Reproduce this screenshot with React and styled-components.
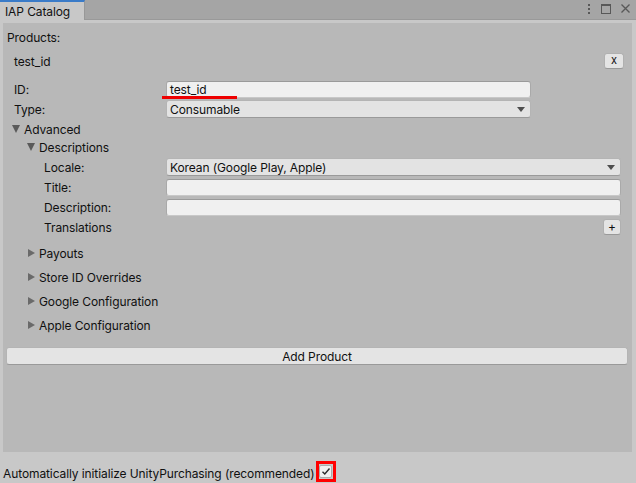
import React from "react";
import styled, { createGlobalStyle } from "styled-components";

const GlobalStyle = createGlobalStyle`
  html, body {
    margin: 0;
    padding: 0;
    background: #c8c8c8;
  }
  body {
    font-family: Inter, "Noto Sans", sans-serif;
    font-size: 12px;
    letter-spacing: -0.1px;
    color: #101010;
  }
`;

export default function App() {
  return (
    <Window>
      <GlobalStyle />
      <TabBar>
        <Tab>IAP Catalog</Tab>
        <TabIcons>
          <svg width="4" height="10" viewBox="0 0 4 10">
            <rect x="1" y="0" width="2" height="2" fill="#585858" />
            <rect x="1" y="4" width="2" height="2" fill="#585858" />
            <rect x="1" y="8" width="2" height="2" fill="#585858" />
          </svg>
          <svg width="10" height="10" viewBox="0 0 10 10">
            <rect x="0.5" y="0.5" width="9" height="9" fill="none" stroke="#585858" />
            <rect x="0" y="0" width="10" height="2" fill="#585858" />
          </svg>
          <svg width="9" height="9" viewBox="0 0 9 9">
            <path d="M0.5 0.5 L8.5 8.5 M8.5 0.5 L0.5 8.5" stroke="#585858" strokeWidth="1.3" />
          </svg>
        </TabIcons>
      </TabBar>

      <Content>
        <Panel>
          <PlainRow height={18} indent={4}>Products:</PlainRow>
          <ProductHeader>
            <span>test_id</span>
            <SmallButton>x</SmallButton>
          </ProductHeader>

          <FieldRow top={8}>
            <Label indent={11}>ID:</Label>
            <FieldWrap narrow>
              <TextField>test_id</TextField>
              <RedUnderline />
            </FieldWrap>
          </FieldRow>
          <FieldRow>
            <Label indent={11}>Type:</Label>
            <FieldWrap narrow>
              <Dropdown>
                Consumable
                <Arrow />
              </Dropdown>
            </FieldWrap>
          </FieldRow>

          <Foldout height={18} indent={9} top={1} open>
            <Triangle open />
            Advanced
          </Foldout>
          <Foldout height={18} indent={24} open>
            <Triangle open />
            Descriptions
          </Foldout>

          <FieldRow top={1}>
            <Label indent={41}>Locale:</Label>
            <FieldWrap>
              <Dropdown>
                Korean (Google Play, Apple)
                <Arrow />
              </Dropdown>
            </FieldWrap>
          </FieldRow>
          <FieldRow>
            <Label indent={41}>Title:</Label>
            <FieldWrap>
              <TextField />
            </FieldWrap>
          </FieldRow>
          <FieldRow>
            <Label indent={41}>Description:</Label>
            <FieldWrap>
              <TextField />
            </FieldWrap>
          </FieldRow>
          <FieldRow>
            <Label indent={41}>Translations</Label>
            <FieldWrap>
              <PlusButton>+</PlusButton>
            </FieldWrap>
          </FieldRow>

          <Closed>
            <Foldout height={24} indent={25}>
              <Triangle />
              Payouts
            </Foldout>
            <Foldout height={24} indent={25}>
              <Triangle />
              Store ID Overrides
            </Foldout>
            <Foldout height={24} indent={25}>
              <Triangle />
              Google Configuration
            </Foldout>
            <Foldout height={24} indent={25}>
              <Triangle />
              Apple Configuration
            </Foldout>
          </Closed>

          <AddButton>Add Product</AddButton>
        </Panel>

        <BottomRow>
          <span>Automatically initialize UnityPurchasing (recommended)</span>
          <CheckHighlight>
            <CheckBox>
              <svg width="10" height="9" viewBox="0 0 10 9">
                <path d="M1.5 4.8 L3.8 7 L8.5 1.5" fill="none" stroke="#2a2a2a" strokeWidth="1.4" />
              </svg>
            </CheckBox>
          </CheckHighlight>
        </BottomRow>
      </Content>
    </Window>
  );
}

const Window = styled.div`
  width: 636px;
  height: 483px;
  display: flex;
  flex-direction: column;
  background: #c8c8c8;
  overflow: hidden;
`;

const TabBar = styled.div`
  height: 20px;
  flex: 0 0 20px;
  display: flex;
  align-items: stretch;
  background: #a5a5a5;
  border-bottom: 1px solid #999999;
  box-sizing: border-box;
`;

const Tab = styled.div`
  width: 85px;
  box-sizing: border-box;
  padding-left: 5px;
  display: flex;
  align-items: center;
  background: #c8c8c8;
  border-top: 2px solid #3a7bc8;
  border-right: 1px solid #989898;
  margin-bottom: -1px;
  font-size: 12px;
  color: #111;
`;

const TabIcons = styled.div`
  margin-left: auto;
  display: flex;
  align-items: center;
  gap: 10px;
  padding-right: 6px;
  padding-bottom: 2px;
`;

const Content = styled.div`
  flex: 1;
  display: flex;
  flex-direction: column;
  padding: 3px 4px 0 3px;
`;

const Panel = styled.div`
  height: 429px;
  flex: 0 0 429px;
  background: #b8b8b8;
  padding-top: 5px;
  box-sizing: border-box;
  display: flex;
  flex-direction: column;
`;

const PlainRow = styled.div`
  height: ${(p) => p.height}px;
  display: flex;
  align-items: center;
  padding-left: ${(p) => p.indent}px;
`;

const ProductHeader = styled.div`
  height: 20px;
  margin-top: 5px;
  display: flex;
  align-items: center;
  justify-content: space-between;
  padding: 0 8px 0 11px;
`;

const SmallButton = styled.div`
  width: 20px;
  height: 16px;
  box-sizing: border-box;
  display: flex;
  align-items: center;
  justify-content: center;
  background: #e4e4e4;
  border: 1px solid #b0b0b0;
  border-bottom-color: #999;
  border-radius: 3px;
  font-size: 11px;
  line-height: 1;
  padding-bottom: 2px;
`;

const FieldRow = styled.div`
  height: 20px;
  margin-top: ${(p) => p.top || 0}px;
  display: grid;
  grid-template-columns: 163px 1fr;
  align-items: center;
`;

const Label = styled.div`
  padding-left: ${(p) => p.indent}px;
  white-space: nowrap;
`;

const FieldWrap = styled.div`
  position: relative;
  display: flex;
  justify-content: flex-end;
  padding-right: ${(p) => (p.narrow ? 101 : 11)}px;
`;

const TextField = styled.div`
  flex: 1;
  height: 17px;
  box-sizing: border-box;
  padding-left: 3px;
  display: flex;
  align-items: center;
  background: #f0f0f0;
  border: 1px solid #a9a9a9;
  border-top-color: #9a9a9a;
  border-bottom-color: #c8c8c8;
  border-radius: 3px;
  color: #101010;
`;

const RedUnderline = styled.div`
  position: absolute;
  left: -4px;
  top: 15px;
  width: 75px;
  height: 3px;
  background: #ee0000;
`;

const Dropdown = styled.div`
  flex: 1;
  height: 18px;
  box-sizing: border-box;
  padding-left: 3px;
  display: flex;
  align-items: center;
  background: #e3e3e3;
  border: 1px solid #b4b4b4;
  border-bottom-color: #9a9a9a;
  border-radius: 3px;
`;

const Arrow = styled.span`
  margin-left: auto;
  margin-right: 5px;
  width: 0;
  height: 0;
  border-left: 4px solid transparent;
  border-right: 4px solid transparent;
  border-top: 5px solid #4e4e4e;
`;

const PlusButton = styled.div`
  width: 18px;
  height: 16px;
  box-sizing: border-box;
  display: flex;
  align-items: center;
  justify-content: center;
  background: #e4e4e4;
  border: 1px solid #b0b0b0;
  border-bottom-color: #999;
  border-radius: 3px;
  font-size: 12px;
  line-height: 1;
  padding-bottom: 1px;
`;

const Foldout = styled.div`
  height: ${(p) => p.height}px;
  margin-top: ${(p) => p.top || 0}px;
  display: flex;
  align-items: center;
  padding-left: ${(p) => p.indent}px;
  gap: 3px;
`;

const Triangle = styled.span`
  width: 0;
  height: 0;
  ${(p) =>
    p.open
      ? `
    border-left: 4px solid transparent;
    border-right: 4px solid transparent;
    border-top: 8px solid #5a5a5a;
    margin-right: 1px;
  `
      : `
    border-top: 4px solid transparent;
    border-bottom: 4px solid transparent;
    border-left: 7px solid #6a6a6a;
    margin-right: 1px;
  `}
`;

const Closed = styled.div`
  margin-top: 4px;
  display: flex;
  flex-direction: column;
`;

const AddButton = styled.div`
  margin: 10px 4px 0 3px;
  height: 18px;
  box-sizing: border-box;
  display: flex;
  align-items: center;
  justify-content: center;
  background: #e4e4e4;
  border: 1px solid #b4b4b4;
  border-bottom-color: #999;
  border-radius: 3px;
`;

const BottomRow = styled.div`
  flex: 1;
  display: flex;
  align-items: center;
  padding-top: 11px;
`;

const CheckHighlight = styled.div`
  width: 20px;
  height: 21px;
  box-sizing: border-box;
  border: 3px solid #ff0000;
  display: flex;
  align-items: center;
  justify-content: center;
  margin-left: 1px;
  margin-top: -3px;
`;

const CheckBox = styled.div`
  width: 13px;
  height: 13px;
  box-sizing: border-box;
  background: #f0f0f0;
  border: 1px solid #aaa;
  border-radius: 2px;
  display: flex;
  align-items: center;
  justify-content: center;
`;
